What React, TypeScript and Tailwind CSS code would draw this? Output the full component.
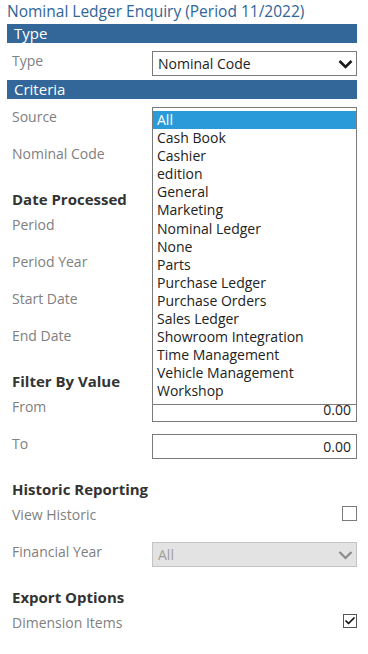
import {Check} from 'lucide-react';

const sources = [
  'All',
  'Cash Book',
  'Cashier',
  'edition',
  'General',
  'Marketing',
  'Nominal Ledger',
  'None',
  'Parts',
  'Purchase Ledger',
  'Purchase Orders',
  'Sales Ledger',
  'Showroom Integration',
  'Time Management',
  'Vehicle Management',
  'Workshop',
];

function Bar({children}: {children: string}) {
  return <div className="h-[19px] bg-[#336699] pl-[7px] text-[15px] leading-[19px] text-white">{children}</div>;
}

function Heading({children}: {children: string}) {
  return <div className="h-[34px] pt-[16px] pl-[5px] text-[15px] leading-[20px] font-bold text-[#333333]">{children}</div>;
}

function Row({label, children}: {label: string; children?: React.ReactNode}) {
  return (
    <div className="flex h-[37px] items-start">
      <div className="w-[145px] pt-[8px] pl-[5px] text-[14px] leading-[20px] text-[#808080]">{label}</div>
      <div className="flex flex-1 justify-end pt-[8px]">{children}</div>
    </div>
  );
}

function TextBox({value = ''}: {value?: string}) {
  return (
    <div className="h-[25px] w-[205px] border border-[#7a7a7a] bg-white px-[5px] text-right text-[14px] leading-[23px] text-[#222]">
      {value}
    </div>
  );
}

function Chevron({color, width}: {color: string; width: number}) {
  return (
    <svg width="15" height="10" viewBox="0 0 15 10" fill="none">
      <polyline points="1.5,2 7.5,8 13.5,2" stroke={color} strokeWidth={width} />
    </svg>
  );
}

export default function App() {
  return (
    <div className="relative w-[368px] bg-white pr-[11px] pl-[7px] font-['Open_Sans',sans-serif]">
      <div className="h-[24px] text-[15.5px] leading-[22px] text-[#2f6598]">Nominal Ledger Enquiry (Period 11/2022)</div>
      <Bar>Type</Bar>
      <Row label="Type">
        <div className="flex h-[25px] w-[205px] items-center justify-between border border-[#7a7a7a] bg-white pr-[3px] pl-[5px] text-[14px] text-[#222]">
          <span>Nominal Code</span>
          <Chevron color="#1a1a1a" width={2.6} />
        </div>
      </Row>
      <Bar>Criteria</Bar>
      <Row label="Source">
        <TextBox />
      </Row>
      <Row label="Nominal Code">
        <TextBox />
      </Row>
      <Heading>Date Processed</Heading>
      <Row label="Period">
        <TextBox />
      </Row>
      <Row label="Period Year">
        <TextBox />
      </Row>
      <Row label="Start Date">
        <TextBox />
      </Row>
      <Row label="End Date">
        <TextBox />
      </Row>
      <Heading>Filter By Value</Heading>
      <Row label="From">
        <TextBox value="0.00" />
      </Row>
      <Row label="To">
        <TextBox value="0.00" />
      </Row>
      <Heading>Historic Reporting</Heading>
      <Row label="View Historic">
        <div className="mt-[1px] h-[15px] w-[15px] border border-[#7a7a7a] bg-white" />
      </Row>
      <Row label="Financial Year">
        <div className="flex h-[25px] w-[205px] items-center justify-between border border-[#c4c4c4] bg-[#e3e3e3] pr-[3px] pl-[5px] text-[14px] text-[#a0a0a0]">
          <span>All</span>
          <Chevron color="#8a8a8a" width={2.2} />
        </div>
      </Row>
      <Heading>Export Options</Heading>
      <Row label="Dimension Items">
        <div className="mt-[1px] flex h-[14px] w-[14px] items-center justify-center border border-[#555] bg-white">
          <Check size={12} strokeWidth={3.5} className="text-[#111]" />
        </div>
      </Row>
      <div className="h-[24px]" />

      {/* open Source dropdown */}
      <div className="absolute top-[107px] left-[152px] w-[205px] border border-[#7a7a7a] bg-white py-[3px] text-[14px] leading-[18.1px] text-[#222]">
        {sources.map((s, i) => (
          <div key={s} className={i === 0 ? 'bg-[#2b9ad8] pl-[4px] text-white' : 'pl-[4px]'}>
            {s}
          </div>
        ))}
      </div>
    </div>
  );
}
